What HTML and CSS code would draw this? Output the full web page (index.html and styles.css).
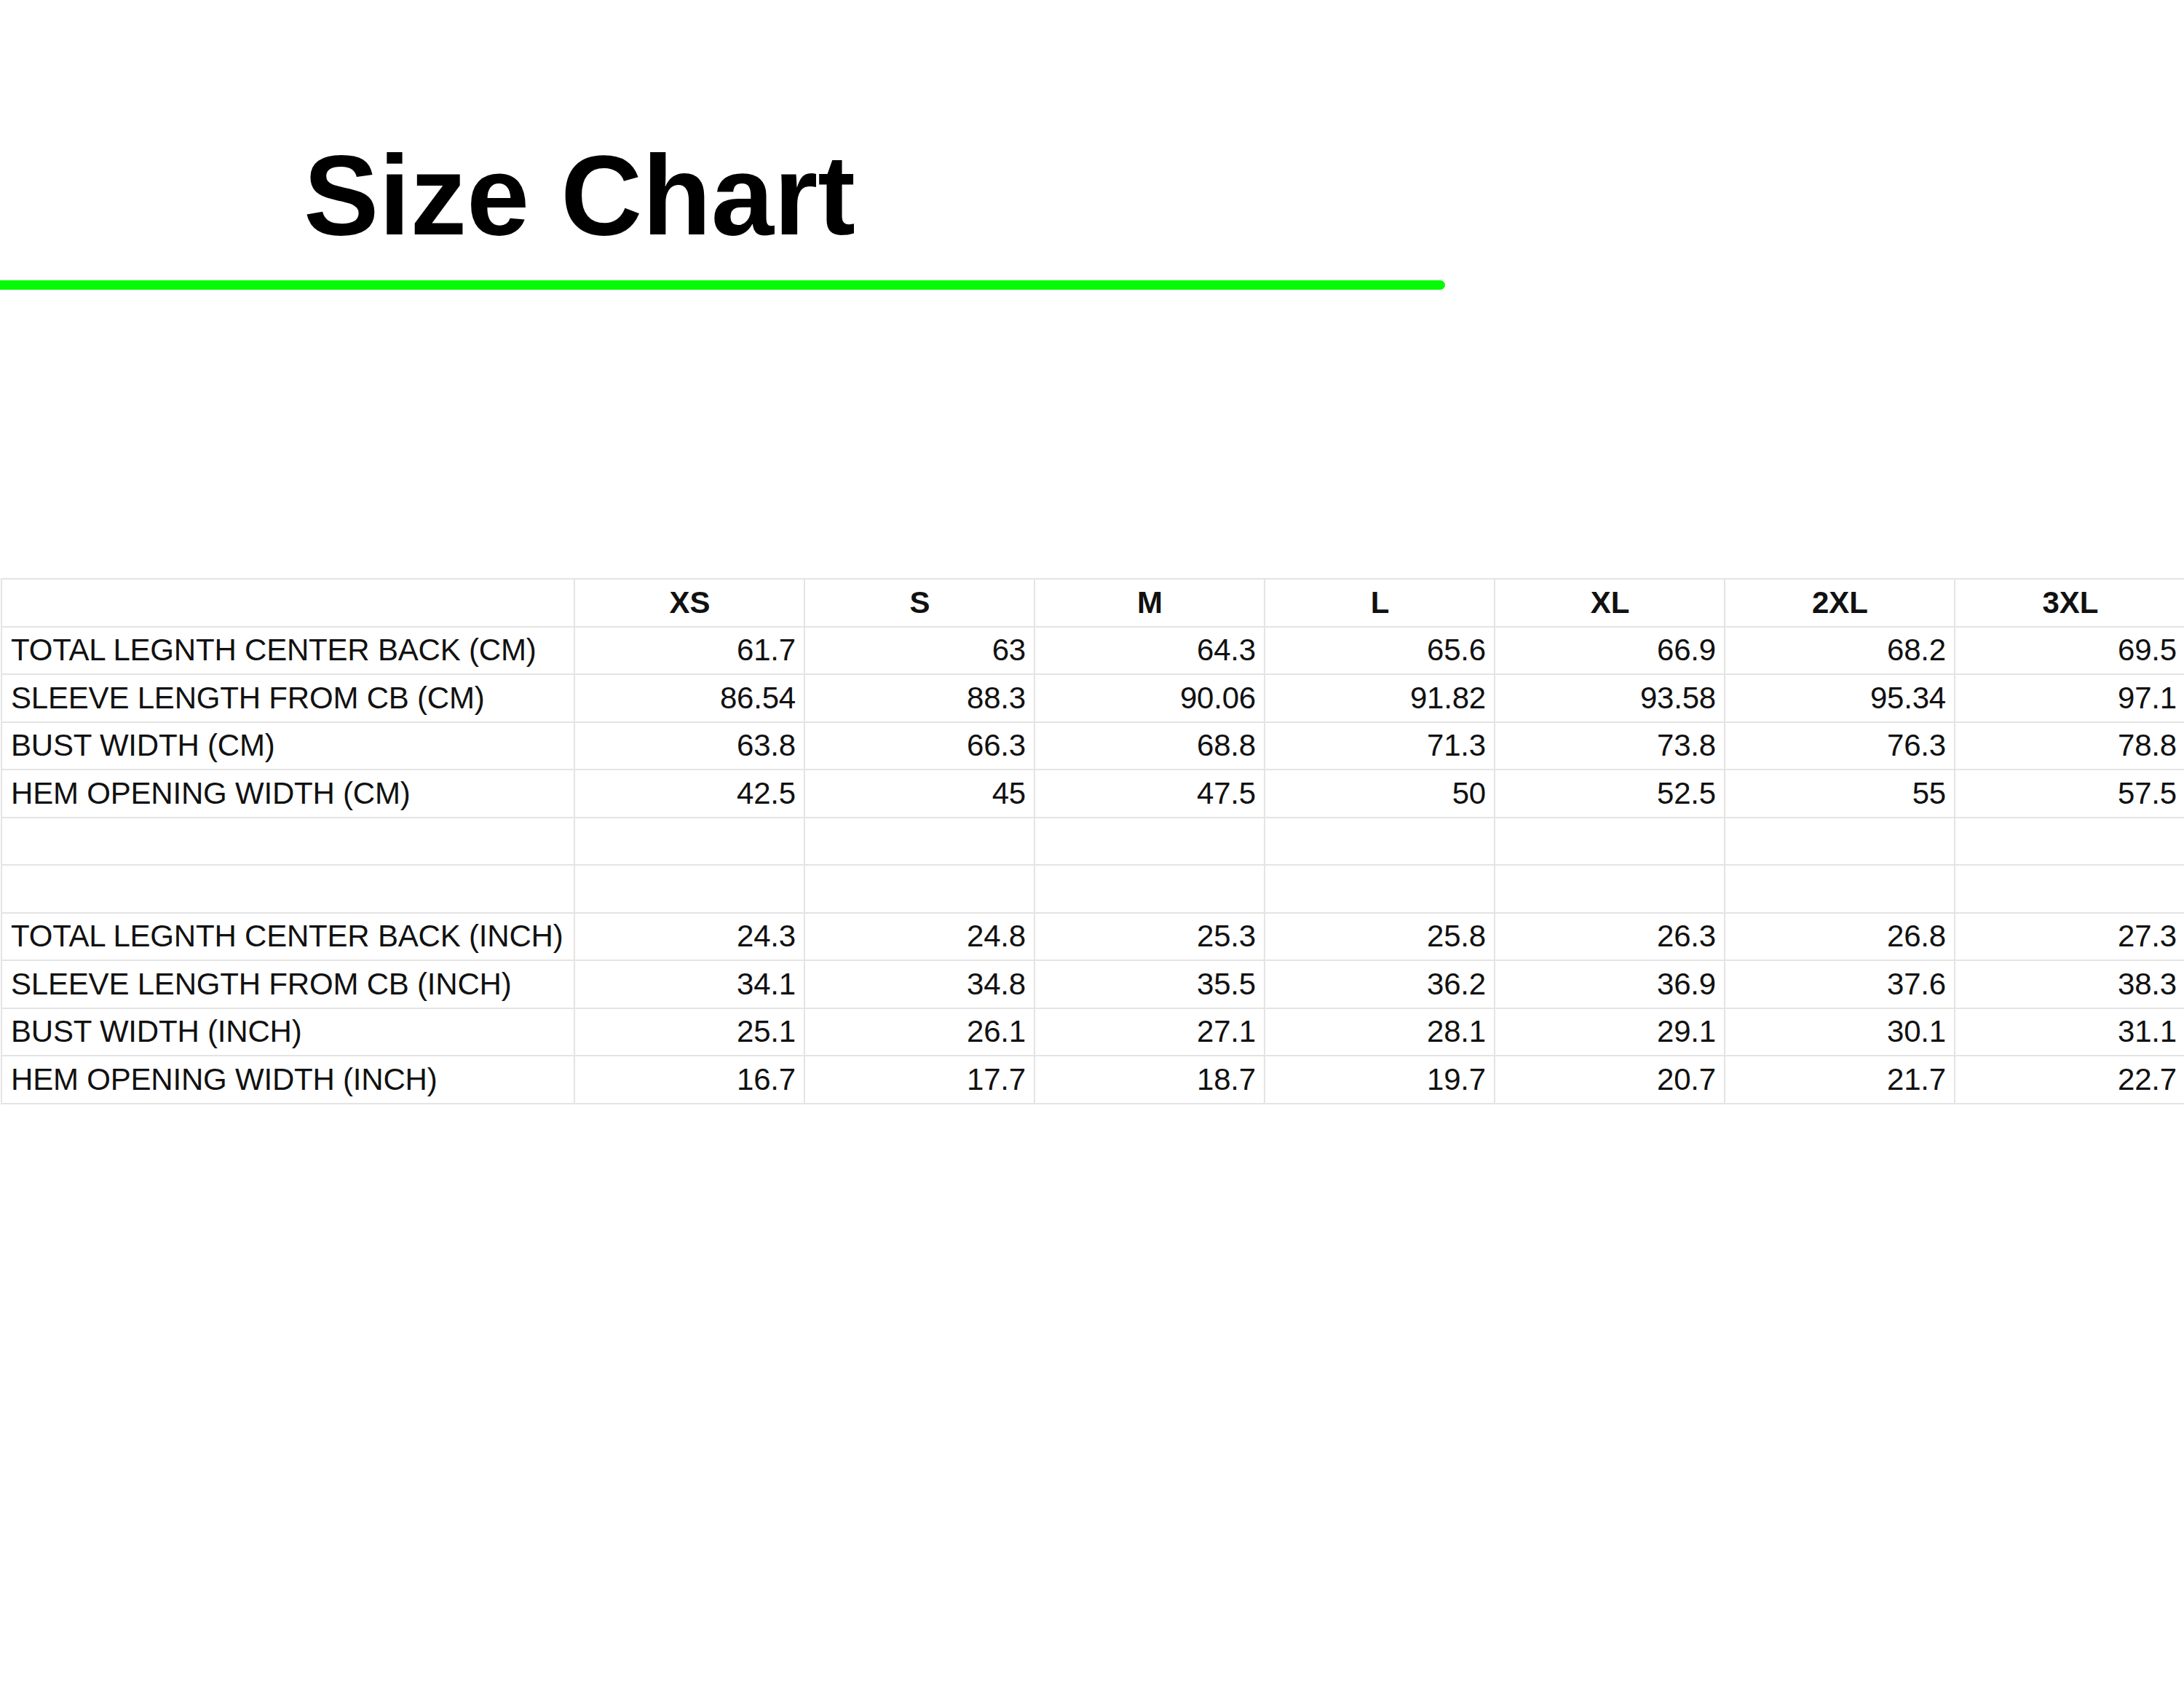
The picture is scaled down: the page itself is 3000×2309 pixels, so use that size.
FILE: index.html
```html
<!DOCTYPE html>
<html lang="en">
<head>
<meta charset="utf-8">
<title>Size Chart</title>
<link rel="stylesheet" href="styles.css">
</head>
<body>
<main class="page">
  <header class="heading">
    <h1 class="title">Size Chart</h1>
    <div class="rule"></div>
  </header>
  <table class="chart">
    <colgroup>
      <col class="col-label">
      <col class="col-size"><col class="col-size"><col class="col-size"><col class="col-size"><col class="col-size"><col class="col-size"><col class="col-size">
    </colgroup>
    <thead>
      <tr><th></th><th>XS</th><th>S</th><th>M</th><th>L</th><th>XL</th><th>2XL</th><th>3XL</th></tr>
    </thead>
    <tbody>
      <tr><td>TOTAL LEGNTH CENTER BACK (CM)</td><td>61.7</td><td>63</td><td>64.3</td><td>65.6</td><td>66.9</td><td>68.2</td><td>69.5</td></tr>
      <tr><td>SLEEVE LENGTH FROM CB (CM)</td><td>86.54</td><td>88.3</td><td>90.06</td><td>91.82</td><td>93.58</td><td>95.34</td><td>97.1</td></tr>
      <tr><td>BUST WIDTH (CM)</td><td>63.8</td><td>66.3</td><td>68.8</td><td>71.3</td><td>73.8</td><td>76.3</td><td>78.8</td></tr>
      <tr><td>HEM OPENING WIDTH (CM)</td><td>42.5</td><td>45</td><td>47.5</td><td>50</td><td>52.5</td><td>55</td><td>57.5</td></tr>
      <tr><td></td><td></td><td></td><td></td><td></td><td></td><td></td><td></td></tr>
      <tr><td></td><td></td><td></td><td></td><td></td><td></td><td></td><td></td></tr>
      <tr><td>TOTAL LEGNTH CENTER BACK (INCH)</td><td>24.3</td><td>24.8</td><td>25.3</td><td>25.8</td><td>26.3</td><td>26.8</td><td>27.3</td></tr>
      <tr><td>SLEEVE LENGTH FROM CB (INCH)</td><td>34.1</td><td>34.8</td><td>35.5</td><td>36.2</td><td>36.9</td><td>37.6</td><td>38.3</td></tr>
      <tr><td>BUST WIDTH (INCH)</td><td>25.1</td><td>26.1</td><td>27.1</td><td>28.1</td><td>29.1</td><td>30.1</td><td>31.1</td></tr>
      <tr><td>HEM OPENING WIDTH (INCH)</td><td>16.7</td><td>17.7</td><td>18.7</td><td>19.7</td><td>20.7</td><td>21.7</td><td>22.7</td></tr>
    </tbody>
  </table>
</main>
</body>
</html>
```
FILE: styles.css
```css
html, body {
  margin: 0;
  padding: 0;
  background: #ffffff;
}

body {
  width: 3000px;
  min-height: 2309px;
  overflow: hidden;
  font-family: "Liberation Sans", Arial, sans-serif;
  color: #000;
}

.heading {
  padding-top: 191px;
}

.title {
  margin: 0;
  padding-left: 417px;
  font-size: 155px;
  line-height: 1;
  font-weight: 700;
}

.rule {
  margin-top: 39px;
  width: 1985px;
  height: 13px;
  background: #05fb05;
  border-radius: 0 7px 7px 0;
}

.chart {
  margin-top: 396px;
  margin-left: 1px;
  width: 2999px;
  table-layout: fixed;
  border-collapse: collapse;
  font-size: 42px;
  color: #111;
}

.col-label {
  width: 787px;
}

.col-size {
  width: 316px;
}

.chart tr {
  height: 65.5px;
}

.chart th,
.chart td {
  border: 2px solid #e4e4e4;
  padding: 0 11px 0 12px;
  white-space: nowrap;
  line-height: 1;
}

.chart th {
  font-weight: 700;
  text-align: center;
}

.chart td {
  text-align: right;
  letter-spacing: -0.2px;
}

.chart td:first-child {
  text-align: left;
}

.chart th:last-child,
.chart td:last-child {
  border-right: none;
}
```
